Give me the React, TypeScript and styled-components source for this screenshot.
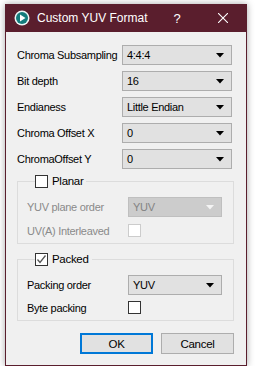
import styled, { createGlobalStyle } from 'styled-components';

const GlobalStyle = createGlobalStyle`
  body {
    margin: 0;
    background: #ffffff;
    font-family: "Liberation Sans", Arial, sans-serif;
    font-size: 11px;
    letter-spacing: -0.3px;
  }
`;

const Window = styled.div`
  width: 240px;
  margin: 4px 0 0 5px;
  border: 1px solid #5a1e2d;
  border-top: none;
  background: #f0f0f0;
  box-shadow: 0 0 7px rgba(0, 0, 0, 0.35);
`;

const TitleBar = styled.div`
  height: 28px;
  background: #5a1e2d;
  display: flex;
  align-items: center;
  padding-left: 8px;
  color: #ffffff;
`;

const TitleText = styled.span`
  flex: 1;
  margin-left: 7px;
  font-size: 12px;
  letter-spacing: 0;
`;

const TitleButton = styled.span<{ $w: number }>`
  width: ${p => p.$w}px;
  display: flex;
  justify-content: center;
  font-size: 13px;
`;

const Body = styled.div`
  padding: 13px 12px 11px 11px;
`;

const FormGrid = styled.div<{ $cols: string; $gap: number }>`
  display: grid;
  grid-template-columns: ${p => p.$cols};
  row-gap: ${p => p.$gap}px;
  align-items: center;
`;

const Label = styled.span<{ $disabled?: boolean }>`
  color: ${p => (p.$disabled ? '#8a8a8a' : '#000000')};
  white-space: nowrap;
`;

const Combo = styled.div<{ $disabled?: boolean }>`
  height: 20px;
  box-sizing: border-box;
  display: flex;
  align-items: center;
  justify-content: space-between;
  padding: 0 7px 0 4px;
  background: ${p => (p.$disabled ? '#cccccc' : '#e1e1e1')};
  border: 1px solid ${p => (p.$disabled ? '#bfbfbf' : '#adadad')};
  color: ${p => (p.$disabled ? '#838383' : '#000000')};
`;

const Box = styled.div<{ $disabled?: boolean }>`
  width: 13px;
  height: 13px;
  box-sizing: border-box;
  border: 1px solid ${p => (p.$disabled ? '#cccccc' : '#333333')};
  background: #ffffff;
  display: flex;
  align-items: center;
  justify-content: center;
`;

const Group = styled.fieldset<{ $top: number }>`
  margin: ${p => p.$top}px 0 0 0;
  padding: 9px 10px 6px 9px;
  border: 1px solid #dcdcdc;
  min-width: 0;
`;

const Legend = styled.legend`
  display: flex;
  align-items: center;
  gap: 4px;
  padding: 0 3px 0 0;
  margin-left: 8px;
  height: 14px;
  font-size: 11.5px;
`;

const ButtonRow = styled.div`
  display: flex;
  justify-content: flex-end;
  gap: 8px;
  margin-top: 12px;
`;

const Button = styled.div<{ $default?: boolean }>`
  width: 73px;
  height: 21px;
  box-sizing: border-box;
  display: flex;
  align-items: center;
  justify-content: center;
  background: #e1e1e1;
  border: ${p => (p.$default ? '2px solid #0078d7' : '1px solid #adadad')};
  font-size: 11.5px;
`;

const Arrow = ({ disabled }: { disabled?: boolean }) => (
  <svg width="8" height="5" viewBox="0 0 8 5">
    <path d="M0 0 H8 L4 4.5 Z" fill={disabled ? '#f4f4f4' : '#000'} />
  </svg>
);

const Check = () => (
  <svg width="11" height="11" viewBox="0 0 11 11">
    <path d="M1.5 5.5 L4 8.5 L9.5 1.5" fill="none" stroke="#555" strokeWidth="1.3" />
  </svg>
);

const Select = ({ value, disabled }: { value: string; disabled?: boolean }) => (
  <Combo $disabled={disabled}>
    <span>{value}</span>
    <Arrow disabled={disabled} />
  </Combo>
);

export default function App() {
  return (
    <>
      <GlobalStyle />
      <Window>
        <TitleBar>
          <svg width="16" height="16" viewBox="0 0 16 16">
            <circle cx="8" cy="8" r="7.5" fill="#eef5f5" />
            <circle cx="8" cy="8" r="6" fill="#137c7c" />
            <path d="M6 4.5 L11.5 8 L6 11.5 Z" fill="#ffffff" />
          </svg>
          <TitleText>Custom YUV Format</TitleText>
          <TitleButton $w={46}>?</TitleButton>
          <TitleButton $w={46}>
            <svg width="10" height="10" viewBox="0 0 10 10">
              <path d="M0 0 L10 10 M10 0 L0 10" stroke="#fff" strokeWidth="1.1" />
            </svg>
          </TitleButton>
        </TitleBar>
        <Body>
          <FormGrid $cols="105px 110px" $gap={6}>
            <Label>Chroma Subsampling</Label>
            <Select value="4:4:4" />
            <Label>Bit depth</Label>
            <Select value="16" />
            <Label>Endianess</Label>
            <Select value="Little Endian" />
            <Label>Chroma Offset X</Label>
            <Select value="0" />
            <Label>ChromaOffset Y</Label>
            <Select value="0" />
          </FormGrid>
          <Group $top={5}>
            <Legend>
              <Box />
              Planar
            </Legend>
            <FormGrid $cols="101px 94px" $gap={7}>
              <Label $disabled>YUV plane order</Label>
              <Select value="YUV" disabled />
              <Label $disabled>UV(A) Interleaved</Label>
              <Box $disabled />
            </FormGrid>
          </Group>
          <Group $top={8}>
            <Legend>
              <Box>
                <Check />
              </Box>
              Packed
            </Legend>
            <FormGrid $cols="101px 94px" $gap={6}>
              <Label>Packing order</Label>
              <Select value="YUV" />
              <Label>Byte packing</Label>
              <Box />
            </FormGrid>
          </Group>
          <ButtonRow>
            <Button $default>OK</Button>
            <Button>Cancel</Button>
          </ButtonRow>
        </Body>
      </Window>
    </>
  );
}
